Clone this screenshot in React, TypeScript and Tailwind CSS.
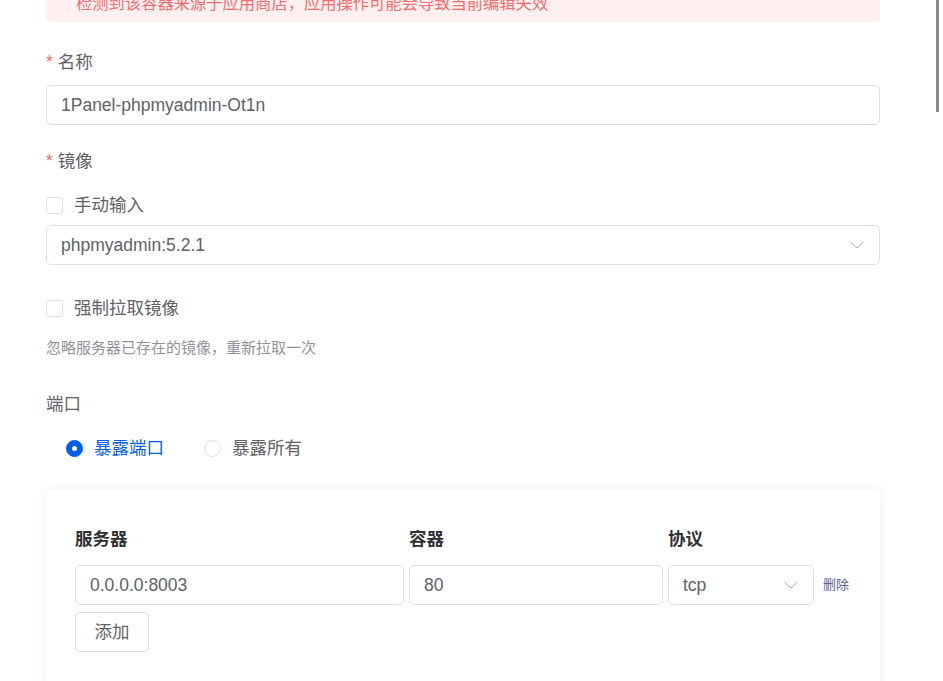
import { useState } from 'react';

const font = '"Liberation Sans", "Noto Sans CJK SC", sans-serif';

const field =
  'flex h-[40px] shrink-0 items-center rounded-[5px] border border-[#dcdfe6] bg-white px-[14px] text-[17.5px] text-[#606266]';

function Chevron() {
  return (
    <svg width="16" height="16" viewBox="0 0 16 16" fill="none" className="shrink-0">
      <path d="M1.5 5 L8 11 L14.5 5" stroke="#a8abb2" strokeWidth="1" />
    </svg>
  );
}

function Checkbox({ label }: { label: string }) {
  const [on, setOn] = useState(false);
  return (
    <label className="flex h-[24px] cursor-pointer items-center gap-[11px] text-[17.5px] text-[#606266]" onClick={() => setOn(!on)}>
      <span
        className={`h-[17px] w-[17px] rounded-[3px] border ${on ? 'border-[#005eeb] bg-[#005eeb]' : 'border-[#dcdfe6] bg-white'}`}
      />
      {label}
    </label>
  );
}

function Label({ text, required }: { text: string; required?: boolean }) {
  return (
    <div className="flex h-[24px] items-center text-[17.5px] text-[#606266]">
      {required && <span className="mr-[5px] text-[#f56c6c]">*</span>}
      {text}
    </div>
  );
}

function Radio({ label, checked, onClick }: { label: string; checked: boolean; onClick: () => void }) {
  return (
    <button type="button" onClick={onClick} className="flex items-center gap-[11px]">
      <span
        className={`flex h-[17px] w-[17px] items-center justify-center rounded-full border ${
          checked ? 'border-[#005eeb] bg-[#005eeb]' : 'border-[#dcdfe6] bg-white'
        }`}
      >
        {checked && <span className="h-[5px] w-[5px] rounded-full bg-white" />}
      </span>
      <span className={checked ? 'text-[#005eeb]' : 'text-[#606266]'}>{label}</span>
    </button>
  );
}

export default function App() {
  const [expose, setExpose] = useState<'port' | 'all'>('port');

  return (
    <div className="relative h-[681px] overflow-hidden bg-white" style={{ fontFamily: font }}>
      <div className="w-[880px] pl-[46px]">
        <div className="mt-[-16px] flex h-[38px] items-center rounded-[5px] bg-[#fef0f0] pl-[30px] text-[16.3px] text-[#f56c6c]">
          检测到该容器来源于应用商店，应用操作可能会导致当前编辑失效
        </div>

        <div className="mt-[28px]">
          <Label text="名称" required />
        </div>
        <div className={`mt-[11px] w-full ${field}`}>1Panel-phpmyadmin-Ot1n</div>

        <div className="mt-[24px]">
          <Label text="镜像" required />
        </div>
        <div className="mt-[20px]">
          <Checkbox label="手动输入" />
        </div>
        <div className={`mt-[8px] w-full justify-between ${field}`}>
          <span>phpmyadmin:5.2.1</span>
          <Chevron />
        </div>

        <div className="mt-[31px]">
          <Checkbox label="强制拉取镜像" />
        </div>
        <p className="mt-[16px] text-[15px] leading-[24px] text-[#909399]">忽略服务器已存在的镜像，重新拉取一次</p>

        <div className="mt-[32px]">
          <Label text="端口" />
        </div>
        <div className="mt-[20px] flex h-[24px] items-center gap-[40px] pl-[20px] text-[17.5px]">
          <Radio label="暴露端口" checked={expose === 'port'} onClick={() => setExpose('port')} />
          <Radio label="暴露所有" checked={expose === 'all'} onClick={() => setExpose('all')} />
        </div>

        <div className="mt-[30px] rounded-[5px] bg-white pb-[40px] pl-[29px] pt-[37px] shadow-[0_0_12px_rgba(0,0,0,0.07)]">
          <div className="flex h-[24px] items-center text-[17.5px] font-bold text-[#303133]">
            <span className="w-[334px]">服务器</span>
            <span className="w-[259px]">容器</span>
            <span>协议</span>
          </div>
          <div className="mt-[14px] flex items-center">
            <div className={`w-[329px] ${field}`}>0.0.0.0:8003</div>
            <div className={`ml-[5px] w-[254px] ${field}`}>80</div>
            <div className={`ml-[5px] w-[146px] justify-between ${field}`}>
              <span>tcp</span>
              <Chevron />
            </div>
            <button type="button" className="ml-[9px] whitespace-nowrap text-[13px] text-[#5b5f97]">删除</button>
          </div>
          <button
            type="button"
            className="mt-[7px] flex h-[40px] w-[74px] items-center justify-center rounded-[5px] border border-[#dcdfe6] bg-white text-[17.5px] text-[#606266]"
          >
            添加
          </button>
        </div>
      </div>

      <div className="absolute right-[4px] top-0 h-[112px] w-[3px] bg-[#8a8a8a]" />
    </div>
  );
}
